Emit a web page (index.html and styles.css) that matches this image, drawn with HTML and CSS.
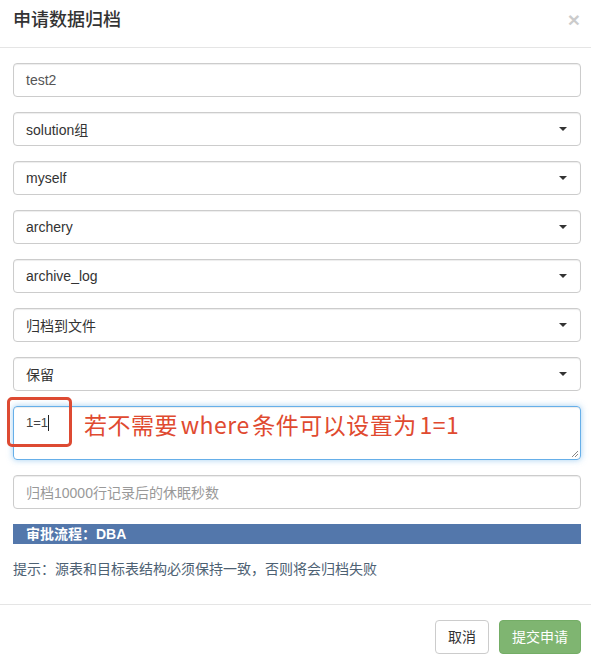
FILE: index.html
```html
<!DOCTYPE html>
<html lang="zh">
<head>
<meta charset="utf-8">
<link rel="stylesheet" href="styles.css">
</head>
<body>
<div class="modal">
  <div class="modal-header">
    <h4 class="modal-title">申请数据归档</h4>
    <span class="close">×</span>
  </div>
  <div class="modal-body">
    <div class="field"><div class="control">test2</div></div>
    <div class="field"><div class="control select">solution组<span class="caret"></span></div></div>
    <div class="field"><div class="control select">myself<span class="caret"></span></div></div>
    <div class="field"><div class="control select">archery<span class="caret"></span></div></div>
    <div class="field"><div class="control select">archive_log<span class="caret"></span></div></div>
    <div class="field"><div class="control select">归档到文件<span class="caret"></span></div></div>
    <div class="field"><div class="control select">保留<span class="caret"></span></div></div>
    <div class="field note-field">
      <div class="control textarea"><span class="ta-text">1=1</span><span class="cursor"></span>
        <svg class="grip" width="9" height="9" viewBox="0 0 9 9"><path d="M8 2 L2 8 M8 5 L5 8" stroke="#888" stroke-width="1"/></svg>
      </div>
      <div class="mark-box"></div>
      <div class="mark-text">若不需要 where 条件可以设置为 1=1</div>
    </div>
    <div class="field"><div class="control placeholder">归档10000行记录后的休眠秒数</div></div>
    <div class="flow-bar">审批流程：DBA</div>
    <p class="hint">提示：源表和目标表结构必须保持一致，否则将会归档失败</p>
  </div>
  <div class="modal-footer">
    <span class="btn btn-default">取消</span>
    <span class="btn btn-success">提交申请</span>
  </div>
</div>
</body>
</html>
```
FILE: styles.css
```css
* { box-sizing: border-box; }
html, body { margin: 0; padding: 0; background: #fff; }
body {
  font-family: "Liberation Sans", "Noto Sans CJK SC", sans-serif;
  font-size: 14px;
  color: #333;
  width: 591px;
}
.modal { width: 591px; }
.modal-header {
  height: 48px;
  border-bottom: 1px solid #e5e5e5;
  display: flex;
  align-items: flex-start;
  justify-content: space-between;
  padding: 8px 11px 0 13px;
}
.modal-title {
  margin: 0;
  font-size: 18px;
  line-height: 24px;
  font-weight: 500;
  color: #333;
}
.close {
  font-size: 21px;
  font-weight: bold;
  line-height: 20px;
  color: #000;
  opacity: 0.2;
  padding-top: 2px;
}
.modal-body {
  padding: 15px 10px 25px 13px;
}
.field {
  margin-bottom: 15px;
}
.control {
  height: 34px;
  border: 1px solid #ccc;
  border-radius: 4px;
  padding: 0 12px;
  display: flex;
  align-items: center;
  font-size: 14px;
  color: #555;
  box-shadow: inset 0 1px 1px rgba(0,0,0,.075);
  position: relative;
}
.select { justify-content: space-between; color: #333; }
.caret {
  width: 0; height: 0;
  border-top: 4px solid #333;
  border-left: 4px solid transparent;
  border-right: 4px solid transparent;
  margin-right: 1px;
}
.note-field { position: relative; }
.textarea {
  height: 54px;
  align-items: flex-start;
  padding: 6px 12px;
  line-height: 20px;
  font-size: 13px;
  border-color: #66afe9;
  box-shadow: inset 0 1px 1px rgba(0,0,0,.075), 0 0 6px rgba(102,175,233,.6);
}
.ta-text { color: #444; }
.cursor {
  display: inline-block;
  width: 1px;
  height: 16px;
  background: #222;
  margin-top: 2px;
  margin-left: 0;
}
.grip { position: absolute; right: 1px; bottom: 1px; }
.mark-box {
  position: absolute;
  left: -6px;
  top: -9px;
  width: 65px;
  height: 50px;
  border: 3px solid #dd4a32;
  border-radius: 5px;
}
.mark-text {
  position: absolute;
  left: 71px;
  top: 3px;
  font-size: 23px;
  line-height: 30px;
  color: #e04a30;
  font-family: "Noto Sans CJK SC", "Liberation Sans", sans-serif;
  word-spacing: -3px;
  letter-spacing: 0.5px;
}
.placeholder { color: #999; }
.flow-bar {
  height: 20px;
  background: #5377ab;
  color: #fff;
  font-weight: bold;
  font-size: 14px;
  line-height: 20px;
  padding-left: 13px;
}
.hint {
  margin: 15px 0 0;
  line-height: 20px;
  font-size: 14px;
  color: #4d6173;
}
.modal-footer {
  border-top: 1px solid #e5e5e5;
  padding: 15px 10px 8px 13px;
  display: flex;
  justify-content: flex-end;
  gap: 10px;
}
.btn {
  height: 34px;
  padding: 0 12px;
  border: 1px solid #ccc;
  border-radius: 4px;
  font-size: 14px;
  line-height: 32px;
  display: inline-block;
}
.btn-default { color: #333; background: #fff; }
.btn-success { color: #fff; background: #7fb571; border-color: #74ad66; }
```
